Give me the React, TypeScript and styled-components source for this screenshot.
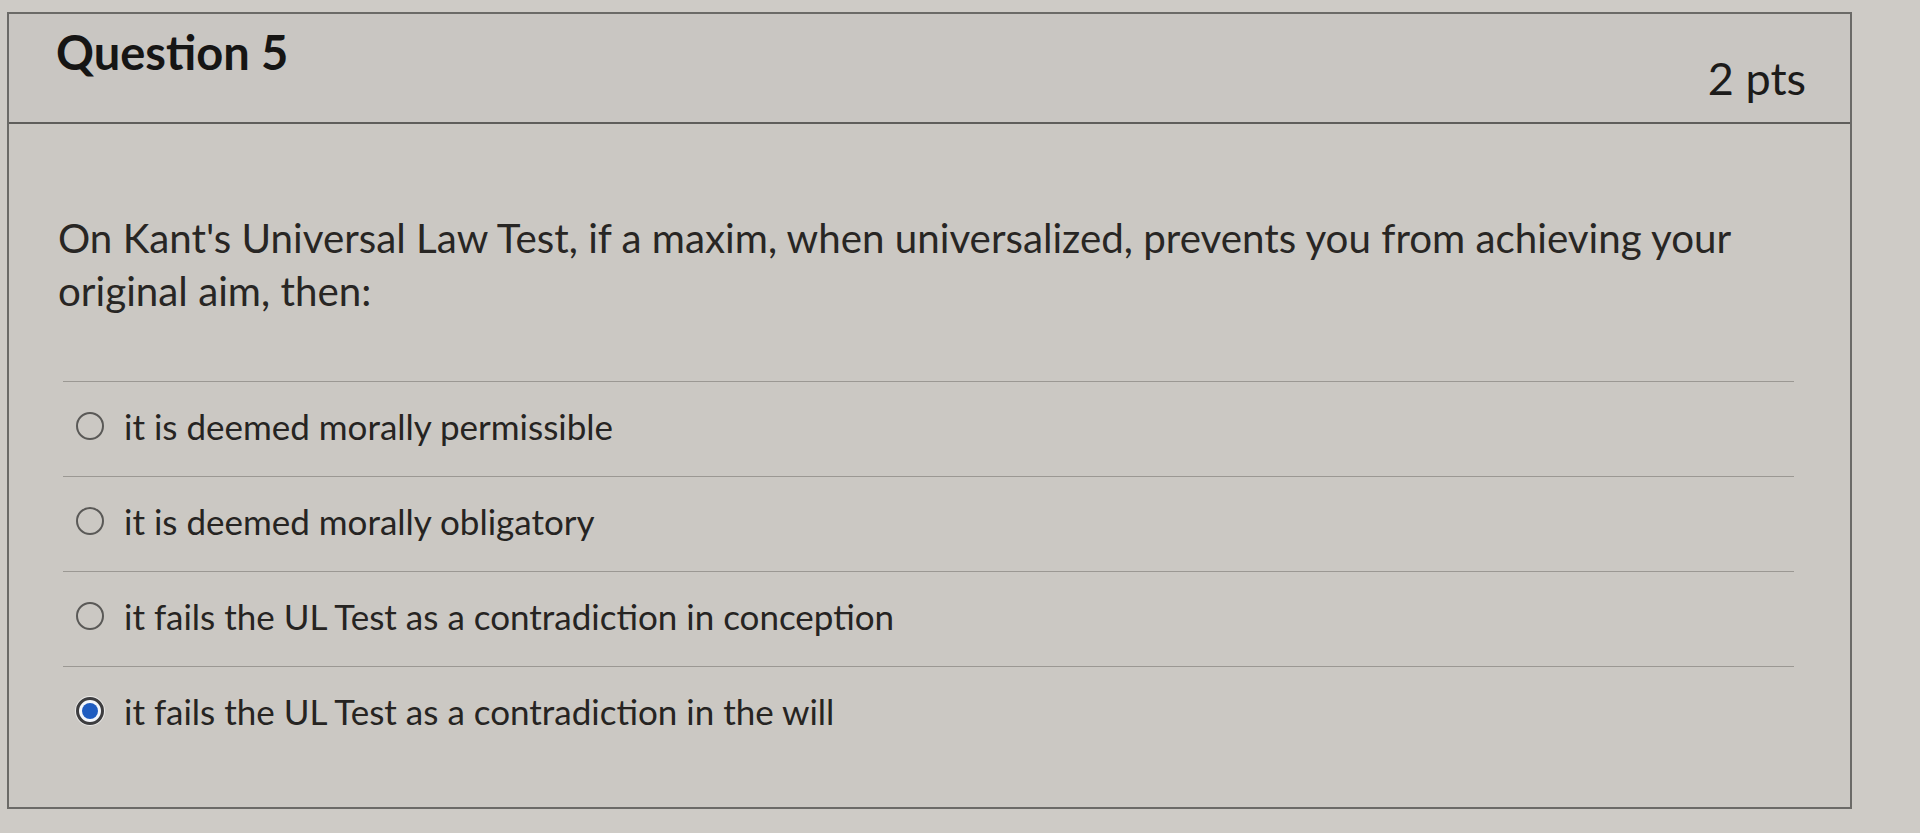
import { createGlobalStyle } from "styled-components";
import styled from "styled-components";

interface Answer {
  id: number;
  label: string;
  checked: boolean;
}

const answers: Answer[] = [
  { id: 1, label: "it is deemed morally permissible", checked: false },
  { id: 2, label: "it is deemed morally obligatory", checked: false },
  { id: 3, label: "it fails the UL Test as a contradiction in conception", checked: false },
  { id: 4, label: "it fails the UL Test as a contradiction in the will", checked: true },
];

const GlobalStyle = createGlobalStyle`
  html, body {
    margin: 0;
    padding: 0;
    background: #cecbc6;
    font-family: Lato, "Liberation Sans", sans-serif;
  }
  #root {
    min-height: 833px;
  }
`;

const Page = styled.div`
  width: 1920px;
  height: 833px;
  padding: 12px 0 0 7px;
  box-sizing: border-box;
  overflow: hidden;
`;

const Card = styled.div`
  width: 1845px;
  height: 797px;
  box-sizing: border-box;
  border: 2px solid #6b6a67;
  background: #cbc8c3;
  display: flex;
  flex-direction: column;
`;

const Header = styled.div`
  height: 110px;
  box-sizing: border-box;
  display: flex;
  justify-content: space-between;
  align-items: flex-start;
  padding: 10px 44px 0 47px;
  background: #c9c6c2;
  border-bottom: 2px solid #5f5e5b;
`;

const Title = styled.h2`
  margin: 0;
  font-size: 47px;
  line-height: 1.2;
  font-weight: 700;
  color: #161514;
`;

const Points = styled.div`
  margin-top: 27px;
  font-size: 45px;
  line-height: 1.2;
  color: #1c1b1a;
`;

const Body = styled.div`
  padding: 87px 50px 0 49px;
`;

const QuestionText = styled.p`
  margin: 0;
  font-size: 40.3px;
  line-height: 53px;
  color: #282624;
`;

const AnswerList = styled.div`
  margin: 64px 6px 0 5px;
`;

const AnswerRow = styled.label`
  display: flex;
  align-items: center;
  gap: 20px;
  padding: 24px 0 30px 13px;
  border-top: 1px solid #9b9893;
  font-size: 35px;
  line-height: 40px;
  color: #262422;
`;

const RadioMark = styled.span<{ $checked: boolean }>`
  flex: none;
  width: 28px;
  height: 28px;
  box-sizing: border-box;
  border-radius: 50%;
  border: ${(p) => (p.$checked ? "3px solid #3d3d3f" : "2px solid #5a5957")};
  background: ${(p) => (p.$checked ? "#f4f6fb" : "transparent")};
  box-shadow: ${(p) => (p.$checked ? "0 0 0 1px rgba(255,255,255,0.6)" : "none")};
  display: flex;
  align-items: center;
  justify-content: center;

  &::after {
    content: "";
    display: ${(p) => (p.$checked ? "block" : "none")};
    width: 16px;
    height: 16px;
    border-radius: 50%;
    background: #1f5cc0;
  }
`;

const App = () => {
  return (
    <>
      <GlobalStyle />
      <Page>
        <Card>
          <Header>
            <Title>Question 5</Title>
            <Points>2 pts</Points>
          </Header>
          <Body>
            <QuestionText>
              On Kant's Universal Law Test, if a maxim, when universalized, prevents you from
              achieving your original aim, then:
            </QuestionText>
            <AnswerList>
              {answers.map((item) => (
                <AnswerRow key={item.id}>
                  <RadioMark $checked={item.checked} />
                  {item.label}
                </AnswerRow>
              ))}
            </AnswerList>
          </Body>
        </Card>
      </Page>
    </>
  );
};

export default App;
